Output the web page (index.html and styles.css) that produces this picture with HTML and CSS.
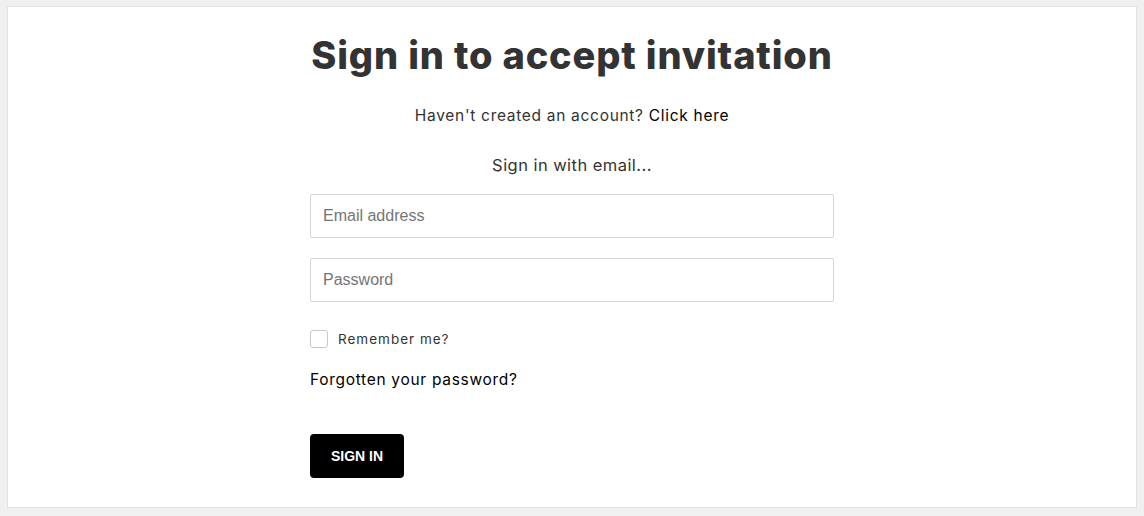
FILE: index.html
```html
<!DOCTYPE html>
<html lang="en">
<head>
  <meta charset="UTF-8">
  <meta name="viewport" content="width=device-width, initial-scale=1.0">
  <title>Sign in to accept invitation</title>
  <link rel="stylesheet" href="styles.css">
</head>
<body>
  <div class="page">
    <div class="login-form">
      <h1 class="title">Sign in to accept invitation</h1>
      <p class="register">Haven't created an account? <a href="#">Click here</a></p>
      <p class="subtitle">Sign in with email...</p>
      <form class="fields">
        <input type="email" class="field" placeholder="Email address">
        <input type="password" class="field" placeholder="Password">
        <label class="remember">
          <input type="checkbox" class="check">
          <span class="check-box"></span>
          <span>Remember me?</span>
        </label>
        <a href="#" class="forgot">Forgotten your password?</a>
        <button type="button" class="btn-signin">SIGN IN</button>
      </form>
    </div>
  </div>
</body>
</html>
```

FILE: styles.css
```css
* {
  margin: 0;
  padding: 0;
  box-sizing: border-box;
}

body {
  background: #f0f0f0;
  padding: 6px 7px 8px;
  font-family: 'Inter', 'Noto Sans', Arial, sans-serif;
  color: #333;
}

.page {
  background: #fff;
  border: 1px solid #e2e2e2;
  height: 502px;
  display: flex;
  justify-content: center;
}

.login-form {
  width: 524px;
  display: flex;
  flex-direction: column;
}

.title {
  font-size: 38px;
  font-weight: 800;
  color: #333;
  text-align: center;
  line-height: 48px;
  margin-top: 24px;
  letter-spacing: 0.85px;
  white-space: nowrap;
}

.register {
  font-size: 15.5px;
  text-align: center;
  margin-top: 25px;
  line-height: 24px;
  letter-spacing: 0.7px;
}

.register a {
  color: #000;
  text-decoration: none;
}

.subtitle {
  font-size: 16.5px;
  text-align: center;
  margin-top: 25px;
  line-height: 24px;
  letter-spacing: 0.45px;
}

.fields {
  display: flex;
  flex-direction: column;
  align-items: flex-start;
  margin-top: 17px;
}

.field {
  width: 100%;
  height: 44px;
  border: 1px solid #d6d6d6;
  border-radius: 2px;
  padding: 0 12px;
  font-family: 'Liberation Sans', Arial, sans-serif;
  font-size: 16px;
  color: #333;
  margin-bottom: 20px;
  outline: none;
}

.field::placeholder {
  color: #757575;
}

.remember {
  display: flex;
  align-items: center;
  gap: 10px;
  font-size: 13.5px;
  color: #333;
  margin-top: 8px;
  letter-spacing: 1px;
  cursor: pointer;
}

.check {
  display: none;
}

.check-box {
  width: 18px;
  height: 18px;
  border: 1px solid #c8c8c8;
  border-radius: 3px;
  background: #fff;
}

.forgot {
  font-size: 15.5px;
  color: #000;
  text-decoration: none;
  margin-top: 20px;
  line-height: 24px;
  letter-spacing: 0.7px;
}

.btn-signin {
  margin-top: 42px;
  width: 94px;
  height: 44px;
  background: #000;
  color: #fff;
  border: none;
  border-radius: 4px;
  font-family: 'Liberation Sans', Arial, sans-serif;
  font-weight: 700;
  font-size: 14px;
  cursor: pointer;
}
```
